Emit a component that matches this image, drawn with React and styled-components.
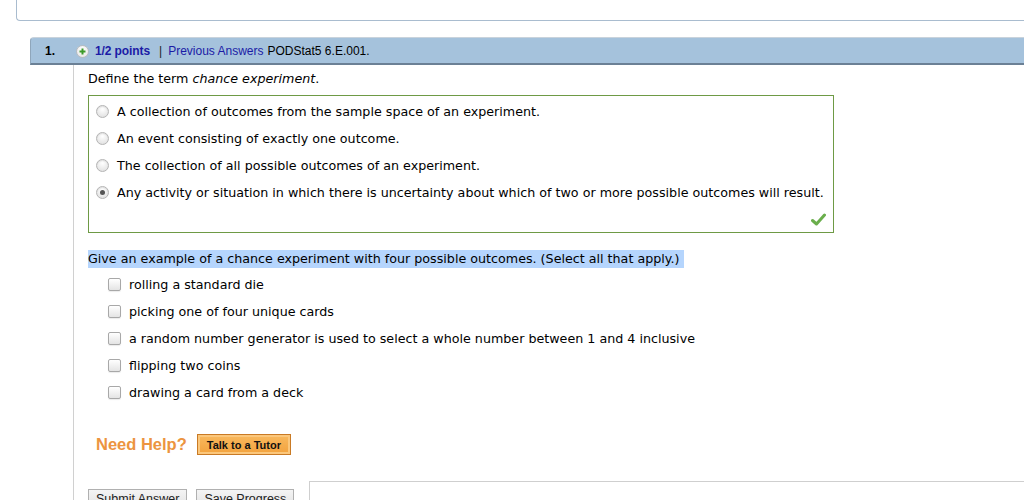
import React from "react";
import styled, { createGlobalStyle } from "styled-components";

const Global = createGlobalStyle`
  html, body { margin: 0; padding: 0; background: #fff; }
  body { font-family: "DejaVu Sans", Verdana, sans-serif; color: #000; overflow: hidden; }
`;

const Page = styled.div`
  width: 1024px;
  height: 500px;
  overflow: hidden;
  position: relative;
`;

const TopBox = styled.div`
  margin-left: 16px;
  height: 20px;
  border-left: 1px solid #a9bccf;
  border-bottom: 1px solid #a9bccf;
  border-bottom-left-radius: 4px;
`;

const Header = styled.div`
  margin: 16px 0 0 30px;
  background: #a5c2dc;
  border-top: 1px solid #c9d3dc;
  border-left: 1px solid #8fa6bb;
  border-bottom: 2px solid #6b8095;
  border-top-left-radius: 4px;
  display: flex;
  align-items: center;
  padding-top: 1px;
  box-sizing: border-box;
  height: 28px;
  font-family: "Liberation Sans", Arial, sans-serif;
  font-size: 12px;
`;

const Num = styled.span`
  font-weight: bold;
  margin-left: 14px;
  width: 31px;
`;

const PlusIcon = styled.span`
  width: 11px;
  height: 11px;
  border-radius: 50%;
  background: radial-gradient(circle at 50% 35%, #ffffff, #e2e2e2);
  border: 1px solid #b8bcc0;
  display: inline-flex;
  align-items: center;
  justify-content: center;
  margin-right: 6px;
`;

const Points = styled.span`
  font-weight: bold;
  color: #1b1ba6;
  letter-spacing: -0.1px;
`;

const Sep = styled.span`
  margin: 0 6px 0 9px;
  color: #222;
`;

const Link = styled.span`
  color: #1b1ba6;
  margin-right: 4px;
`;

const Body = styled.div`
  margin-left: 73px;
  border-left: 1px solid #d0d0d0;
  padding-left: 14px;
  padding-top: 6px;
  height: 500px;
  font-size: 12.7px;
`;

const Prompt = styled.div`
  line-height: 16px;
  height: 16px;
  padding: ${(p) => (p.$hl ? "1px 0" : "0")};
  background: ${(p) => (p.$hl ? "#b5d5fd" : "transparent")};
  display: inline-block;
  white-space: nowrap;
`;

const AnswerBox = styled.div`
  margin-top: 8px;
  width: 744px;
  border: 1px solid #6e9a45;
  padding-top: 2px;
`;

const Row = styled.div`
  height: 27px;
  display: flex;
  align-items: center;
  padding-left: ${(p) => p.$indent}px;
  white-space: nowrap;
`;

const Radio = styled.span`
  width: 11px;
  height: 11px;
  border-radius: 50%;
  border: 1px solid #b4b4b4;
  background: radial-gradient(circle at 50% 30%, #ffffff, #dcdcdc);
  margin-right: 8px;
  display: inline-flex;
  align-items: center;
  justify-content: center;
  box-shadow: inset 0 1px 1px rgba(0,0,0,0.08);
  &::after {
    content: "";
    width: 5px;
    height: 5px;
    border-radius: 50%;
    background: ${(p) => (p.$checked ? "#555" : "transparent")};
  }
`;

const CheckRow = styled.div`
  height: 26px;
  display: flex;
  justify-content: flex-end;
  align-items: center;
  padding-right: 7px;
`;

const Checkbox = styled.span`
  width: 11px;
  height: 11px;
  border-radius: 2px;
  border: 1px solid #a8a8a8;
  background: linear-gradient(#ffffff, #e4e4e4);
  margin-right: 8px;
  box-shadow: 0 1px 1px rgba(0,0,0,0.08);
`;

const Second = styled.div`
  margin-top: 17px;
`;

const List = styled.div`
  margin-top: 3px;
`;

const Help = styled.div`
  margin-top: 28px;
  display: flex;
  align-items: center;
  padding-left: 8px;
`;

const NeedHelp = styled.span`
  font-family: "Liberation Sans", Arial, sans-serif;
  font-weight: bold;
  font-size: 16.5px;
  color: #ec9440;
  margin-right: 10px;
`;

const Tutor = styled.span`
  display: inline-flex;
  align-items: center;
  justify-content: center;
  height: 19px;
  padding: 0 9px;
  background: linear-gradient(#f9b95e, #f2a23e);
  border: 1px solid #c97a25;
  box-shadow: inset 0 0 0 2px #fbc77c;
  font-family: "Liberation Sans", Arial, sans-serif;
  font-weight: bold;
  font-size: 11px;
  color: #111;
`;

const Actions = styled.div`
  margin-top: 24px;
  display: flex;
  align-items: flex-start;
`;

const Btn = styled.span`
  display: inline-flex;
  align-items: flex-start;
  justify-content: center;
  height: 22px;
  padding: 2px 7px 0;
  margin-right: 9px;
  margin-top: 10px;
  background: linear-gradient(#f4f4f4, #dcdcdc);
  border: 1px solid #b0b0b0;
  font-family: "Liberation Sans", Arial, sans-serif;
  font-size: 12.5px;
  color: #222;
  white-space: nowrap;
`;

const Panel = styled.div`
  margin-left: 6px;
  margin-top: 2px;
  flex: 1;
  height: 40px;
  border: 1px solid #cfcfcf;
  border-right: none;
`;

const radios = [
  "A collection of outcomes from the sample space of an experiment.",
  "An event consisting of exactly one outcome.",
  "The collection of all possible outcomes of an experiment.",
  "Any activity or situation in which there is uncertainty about which of two or more possible outcomes will result.",
];

const checks = [
  "rolling a standard die",
  "picking one of four unique cards",
  "a random number generator is used to select a whole number between 1 and 4 inclusive",
  "flipping two coins",
  "drawing a card from a deck",
];

export default function App() {
  return (
    <Page>
      <Global />
      <TopBox />
      <Header>
        <Num>1.</Num>
        <PlusIcon>
          <svg width="7" height="7" viewBox="0 0 7 7">
            <path d="M3.5 0.5v6M0.5 3.5h6" stroke="#3c9a2a" strokeWidth="2" />
          </svg>
        </PlusIcon>
        <Points>1/2 points</Points>
        <Sep>|</Sep>
        <Link>Previous Answers</Link>
        <span>PODStat5 6.E.001.</span>
      </Header>
      <Body>
        <Prompt>
          Define the term <i>chance experiment</i>.
        </Prompt>
        <AnswerBox>
          {radios.map((t, i) => (
            <Row key={i} $indent={7}>
              <Radio $checked={i === 3} />
              {t}
            </Row>
          ))}
          <CheckRow>
            <svg width="15" height="13" viewBox="0 0 15 13">
              <path d="M1.5 7.5 L5.5 11 L13.5 2" fill="none" stroke="#6aae4c" strokeWidth="3" strokeLinecap="round" strokeLinejoin="round" />
            </svg>
          </CheckRow>
        </AnswerBox>
        <Second>
          <Prompt $hl>
            Give an example of a chance experiment with four possible outcomes. (Select all that apply.)&nbsp;
          </Prompt>
        </Second>
        <List>
          {checks.map((t, i) => (
            <Row key={i} $indent={20}>
              <Checkbox />
              {t}
            </Row>
          ))}
        </List>
        <Help>
          <NeedHelp>Need Help?</NeedHelp>
          <Tutor>Talk to a Tutor</Tutor>
        </Help>
        <Actions>
          <Btn>Submit Answer</Btn>
          <Btn>Save Progress</Btn>
          <Panel />
        </Actions>
      </Body>
    </Page>
  );
}
